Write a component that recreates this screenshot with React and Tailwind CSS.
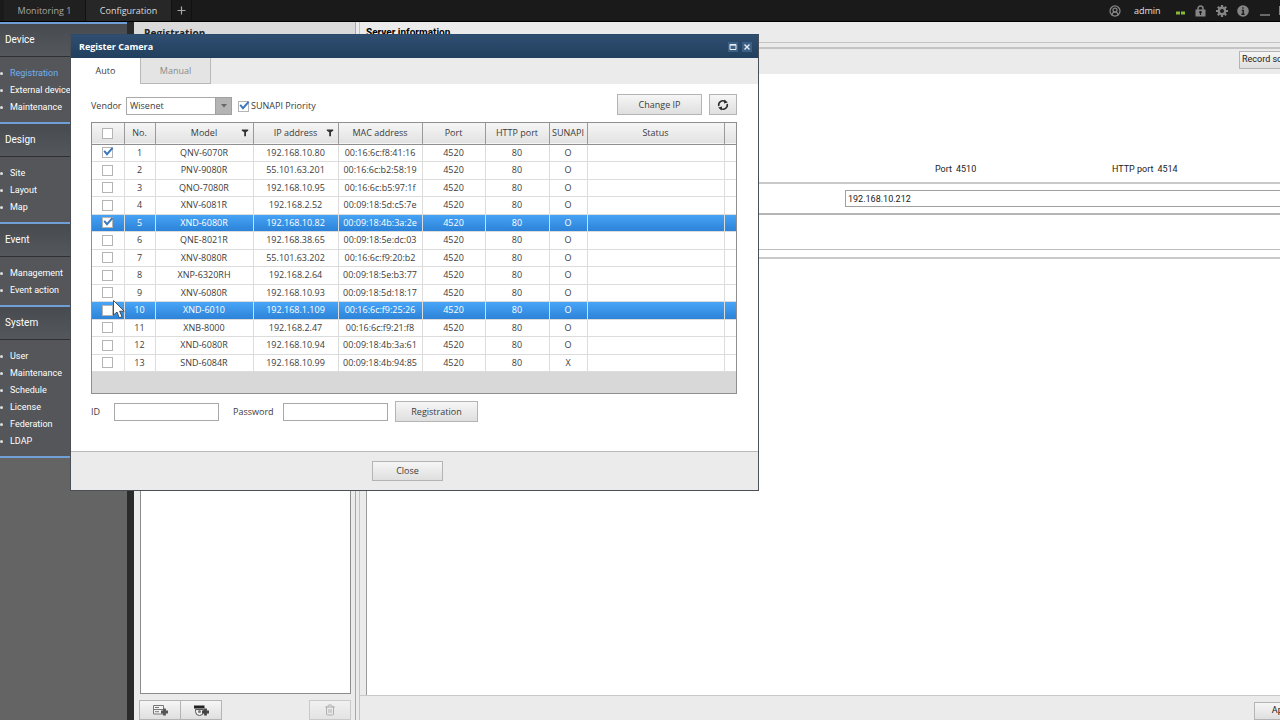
import React from 'react';
import { CircleUserRound, Trash2 } from 'lucide-react';

const menu = [
  { title: 'Device', items: ['Registration', 'External device', 'Maintenance'] },
  { title: 'Design', items: ['Site', 'Layout', 'Map'] },
  { title: 'Event', items: ['Management', 'Event action'] },
  { title: 'System', items: ['User', 'Maintenance', 'Schedule', 'License', 'Federation', 'LDAP'] },
];

const cameras = [
  { model: 'QNV-6070R', ip: '192.168.10.80', mac: '00:16:6c:f8:41:16', sunapi: 'O', checked: true },
  { model: 'PNV-9080R', ip: '55.101.63.201', mac: '00:16:6c:b2:58:19', sunapi: 'O' },
  { model: 'QNO-7080R', ip: '192.168.10.95', mac: '00:16:6c:b5:97:1f', sunapi: 'O' },
  { model: 'XNV-6081R', ip: '192.168.2.52', mac: '00:09:18:5d:c5:7e', sunapi: 'O' },
  { model: 'XND-6080R', ip: '192.168.10.82', mac: '00:09:18:4b:3a:2e', sunapi: 'O', checked: true, selected: true },
  { model: 'QNE-8021R', ip: '192.168.38.65', mac: '00:09:18:5e:dc:03', sunapi: 'O' },
  { model: 'XNV-8080R', ip: '55.101.63.202', mac: '00:16:6c:f9:20:b2', sunapi: 'O' },
  { model: 'XNP-6320RH', ip: '192.168.2.64', mac: '00:09:18:5e:b3:77', sunapi: 'O' },
  { model: 'XNV-6080R', ip: '192.168.10.93', mac: '00:09:18:5d:18:17', sunapi: 'O' },
  { model: 'XND-6010', ip: '192.168.1.109', mac: '00:16:6c:f9:25:26', sunapi: 'O', selected: true },
  { model: 'XNB-8000', ip: '192.168.2.47', mac: '00:16:6c:f9:21:f8', sunapi: 'O' },
  { model: 'XND-6080R', ip: '192.168.10.94', mac: '00:09:18:4b:3a:61', sunapi: 'O' },
  { model: 'SND-6084R', ip: '192.168.10.99', mac: '00:09:18:4b:94:85', sunapi: 'X' },
];

const Check = ({ label, ...props }) => (
  <span className="relative inline-block w-[11px] h-[11px] align-middle">
    <input
      type="checkbox"
      aria-label={label}
      className="peer appearance-none block w-[11px] h-[11px] bg-white border border-[#b4b4b4]"
      {...props}
    />
    <svg viewBox="0 0 11 11" className="hidden peer-checked:block absolute inset-0 w-[11px] h-[11px] pointer-events-none overflow-visible">
      <path d="M2.2 3.8 L5 7.2 L10.6 0.8" fill="none" stroke="#3a78be" strokeWidth="1.9" />
    </svg>
  </span>
);

const Filter = () => (
  <svg viewBox="0 0 8 8" className="w-2 h-2 shrink-0">
    <path d="M0.8 0.5h6.4v1.3L5 3.2v4H3.2v-4L0.8 1.8z" fill="#333" />
  </svg>
);

const Button = ({ className, children, ...props }) => (
  <button
    className={`flex items-center border border-[#b4b4b4] bg-linear-to-b from-[#f6f6f6] to-[#dfdfdf] ${className}`}
    {...props}
  >
    {children}
  </button>
);

const TopBar = () => (
  <header className="h-[22px] shrink-0 flex items-stretch bg-[#1a1a1a] border-b border-black text-[9px] text-[#a8a8a8]">
    <nav className="flex pl-1">
      <button className="w-[82px] border-r border-[#111] bg-[#202020]">Monitoring 1</button>
      <button className="w-[85px] bg-[#272727] text-[#dcdcdc]">Configuration</button>
      <button aria-label="Add tab" className="w-[21px] flex items-center justify-center border-x border-[#111]">
        <svg viewBox="0 0 9 9" className="w-[9px] h-[9px]"><path d="M4.5 0.5v8M0.5 4.5h8" stroke="#aaa" strokeWidth="1.2" /></svg>
      </button>
    </nav>
    <div className="ml-auto flex items-center">
      <CircleUserRound className="w-3 h-3 mr-[13px] text-[#858585]" strokeWidth={2.5} />
      <span className="w-[42px] text-[#e0e0e0]">admin</span>
      <svg viewBox="0 0 10 4" className="w-[10px] h-1 mr-[9px] mt-[5px]">
        <path d="M0 0.5h4v3H0zM5 0.5h4v3H5z" fill="#86b93a" />
      </svg>
      <svg viewBox="0 0 11 12" className="w-[11px] h-3 mr-[10px]">
        <path d="M3 5V3.5a2.5 2.5 0 0 1 5 0V5" fill="none" stroke="#858585" strokeWidth="1.5" />
        <path d="M0.5 4.5h10v7h-10z" fill="#858585" />
        <path d="M5.5 6v4M4 7.2h3" stroke="#1a1a1a" strokeWidth="1.2" />
      </svg>
      <svg viewBox="0 0 12 12" className="w-3 h-3 mr-[9px]">
        <circle cx="6" cy="6" r="3.2" fill="none" stroke="#858585" strokeWidth="2.4" />
        <path d="M6 0v2.5M6 9.5V12M0 6h2.5M9.5 6H12M1.8 1.8l1.7 1.7M8.5 8.5l1.7 1.7M10.2 1.8L8.5 3.5M3.5 8.5l-1.7 1.7" stroke="#858585" strokeWidth="2.2" />
      </svg>
      <svg viewBox="0 0 12 12" className="w-3 h-3 mr-[11px]">
        <circle cx="6" cy="6" r="5.8" fill="#858585" />
        <path d="M6 2.2v1.6M4.8 5.4H6.2V9M4.5 9.2h3" fill="none" stroke="#1a1a1a" strokeWidth="1.4" />
      </svg>
      <svg viewBox="0 0 10 2" className="w-[10px] h-[2px] mr-[9px] mt-2"><path d="M0 1h10" stroke="#858585" strokeWidth="1.5" /></svg>
      <span className="w-px h-[9px] bg-[#858585]" />
    </div>
  </header>
);

const SideMenu = () => (
  <aside className="w-[127px] shrink-0 bg-[#646464] text-white font-['Roboto',sans-serif]">
    <div className="border-b-2 border-[#6f9fd6]">
      {menu.map((section) => (
        <section key={section.title} className="bg-[#545659] border-t-2 border-[#6f9fd6]">
          <h2 className="h-[33px] pl-[5px] pb-[2px] flex items-center text-[10px] bg-linear-to-b from-[#474a4e] to-[#54575b] border-b border-[#2e3033]">
            {section.title}
          </h2>
          <ul className="pt-2 pb-[6px]">
            {section.items.map((item, i) => (
              <li key={item} className="h-[17px] flex items-center text-[9px]">
                <span className="w-[10px] flex"><span className="w-[3px] h-[3px] rounded-full bg-[#dedede]" /></span>
                <a href="#" className={section.title === 'Device' && i === 0 ? 'text-[#6fb1f5]' : 'text-white'}>{item}</a>
              </li>
            ))}
          </ul>
        </section>
      ))}
    </div>
  </aside>
);

const TreePanel = () => (
  <section className="w-[222px] shrink-0 flex flex-col bg-[#ebebeb] border-r border-[#a9a9a9]">
    <h2 className="h-[26px] pl-[10px] pt-1 text-[10px] leading-[14px] font-bold text-[#222] bg-[#dadada] border-b border-[#bbb]">Registration</h2>
    <div className="flex-1 ml-[6px] mr-1 bg-white border border-[#8c8c8c]" />
    <div className="h-[26px] pl-[5px] pr-1 pt-[6px] flex">
      <Button aria-label="Add server" className="w-[42px] justify-center">
        <svg viewBox="0 0 15 11" className="w-[15px] h-[11px]">
          <path d="M0.5 0.5h10v4h-10zM0.5 4.5h10v4.5h-10zM2 2.5h4M2 6.7h4" fill="#f2f2f2" stroke="#777" />
          <path d="M11.5 3.5v7M8 7h7" stroke="#555" strokeWidth="2.8" />
        </svg>
      </Button>
      <Button aria-label="Add camera" className="w-[42px] -ml-px justify-center">
        <svg viewBox="0 0 15 11" className="w-[15px] h-[11px]">
          <path d="M0 0.5h10.5v3H0z" fill="#222" />
          <path d="M1.5 4.5h8v2a4 4 0 0 1-8 0z" fill="#eee" stroke="#555" />
          <circle cx="5.5" cy="6.5" r="1.5" fill="#777" />
          <path d="M11.5 3.5v7M8 7h7" stroke="#444" strokeWidth="2.8" />
        </svg>
      </Button>
      <Button aria-label="Delete" disabled className="w-[42px] ml-auto justify-center opacity-60">
        <Trash2 className="w-3 h-3 text-[#888]" />
      </Button>
    </div>
  </section>
);

const ServerPanel = () => (
  <main className="flex-1 min-w-0 flex flex-col ml-[3px] overflow-hidden bg-[#ebebeb] border-l border-[#c4c4c4] text-[9px] text-[#222] font-['Roboto',sans-serif]">
    <h2 className="h-[21px] pl-[6px] pt-1 text-[10px] leading-[14px] font-bold text-black border-b border-[#c4c4c4]">Server information</h2>
    <div className="h-[27px] mt-1 pt-[2px] border-t-2 border-[#c4c4c4] flex justify-end items-start">
      <Button className="w-[82px] h-[18px] px-[2px] -mr-[41px] shrink-0 border-[#8c8c8c] whitespace-nowrap">Record schedule</Button>
    </div>
    <div className="flex-1 ml-[6px] bg-white border-l border-[#9a9a9a]">
      <div className="h-[110px] pb-[6px] flex items-end justify-end border-b-2 border-[#c9c9c9]">
        <dl className="flex gap-1 w-[177px]"><dt>Port</dt><dd>4510</dd></dl>
        <dl className="flex gap-1 w-[168px]"><dt>HTTP port</dt><dd>4514</dd></dl>
      </div>
      <div className="h-[31px] pt-[6px] flex justify-end border-b-2 border-[#b5b5b5]">
        <input
          aria-label="IP address"
          defaultValue="192.168.10.212"
          className="w-[436px] h-[17px] -mr-px px-[2px] bg-white border border-[#a0a0a0] outline-none"
        />
      </div>
      <div className="h-[35px] border-b border-[#bcbcbc]" />
      <div className="h-[9px] border-b-2 border-[#c9c9c9]" />
    </div>
    <div className="h-[25px] pt-[6px] flex justify-end border-t border-[#c9c9c9]">
      <Button className="w-[58px] h-[18px] -mr-8 shrink-0 justify-center border-[#8c8c8c]">Apply</Button>
    </div>
  </main>
);

const CameraTable = () => (
  <div className="h-[272px] flex flex-col bg-[#d8d8d8] border border-[#8f8f8f]">
    <table className="w-full h-[249px] table-fixed border-collapse bg-white text-center leading-3">
      <colgroup>
        <col className="w-[32px]" />
        <col className="w-[31px]" />
        <col className="w-[98px]" />
        <col className="w-[85px]" />
        <col className="w-[84px]" />
        <col className="w-[63px]" />
        <col className="w-[64px]" />
        <col className="w-[38px]" />
        <col />
        <col className="w-[12px]" />
      </colgroup>
      <thead>
        <tr className="h-[21px] bg-linear-to-b from-[#f6f6f6] to-[#e2e2e2] border-b border-[#8f8f8f] *:p-0 *:font-normal *:border-r *:border-[#9a9a9a] *:last:border-r-0">
          <th><div className="flex justify-center"><Check label="Select all" /></div></th>
          <th>No.</th>
          <th><div className="flex items-center pr-1"><span className="flex-1 pl-3">Model</span><Filter /></div></th>
          <th><div className="flex items-center pr-1"><span className="flex-1 pl-3">IP address</span><Filter /></div></th>
          <th>MAC address</th>
          <th>Port</th>
          <th>HTTP port</th>
          <th className="whitespace-nowrap">SUNAPI</th>
          <th>Status</th>
          <th />
        </tr>
      </thead>
      <tbody>
        {cameras.map((cam, i) => (
          <tr
            key={i}
            className={`*:p-0 *:border-r *:border-[#dcdcdc] *:last:border-r-0 border-b border-[#dcdcdc] ${cam.selected ? 'bg-linear-to-b from-[#47a5f7] to-[#2d83d8] text-white' : ''}`}
          >
            <td><div className="flex justify-center"><Check label={`Select camera ${i + 1}`} defaultChecked={cam.checked} /></div></td>
            <td>{i + 1}</td>
            <td>{cam.model}</td>
            <td>{cam.ip}</td>
            <td>{cam.mac}</td>
            <td>4520</td>
            <td>80</td>
            <td>{cam.sunapi}</td>
            <td />
            <td />
          </tr>
        ))}
      </tbody>
    </table>
  </div>
);

const RegisterDialog = () => (
  <div
    role="dialog"
    aria-labelledby="dialog-title"
    className="absolute left-[70px] top-[34px] w-[689px] bg-white border border-[#4a4f55] border-t-[#2c4a6b] text-[9px] text-[#3c3c3c]"
  >
    <div className="h-[23px] pl-2 pr-[6px] flex items-center gap-1 bg-linear-to-b from-[#2f4e70] to-[#21405f] text-white">
      <h1 id="dialog-title" className="mr-auto font-bold">Register Camera</h1>
      <button aria-label="Maximize" className="w-[10px] h-[10px] flex items-center justify-center bg-[#3b5f85]">
        <svg viewBox="0 0 8 8" className="w-2 h-2"><path d="M1 1.5h6v5H1zM1 2.2h6" fill="none" stroke="#e8eef4" /></svg>
      </button>
      <button aria-label="Close window" className="w-[10px] h-[10px] flex items-center justify-center bg-[#3b5f85]">
        <svg viewBox="0 0 8 8" className="w-2 h-2"><path d="M1.5 1.5l5 5M6.5 1.5l-5 5" stroke="#e8eef4" strokeWidth="1.4" /></svg>
      </button>
    </div>
    <div role="tablist" className="h-[26px] flex bg-[#ebebeb]">
      <button role="tab" aria-selected="true" className="w-[70px] bg-white border-r border-[#b9b9b9]">Auto</button>
      <button role="tab" aria-selected="false" className="w-[70px] bg-[#e4e4e4] border-r border-b border-[#b9b9b9] text-[#8a8a8a]">Manual</button>
    </div>
    <div className="h-[367px] pt-[10px] pl-5 pr-[21px]">
      <div className="h-[21px] mb-[7px] flex items-end">
        <label htmlFor="vendor" className="w-[35px] h-[18px] flex items-center">Vendor</label>
        <div className="relative w-[106px] h-[18px]">
          <select id="vendor" className="appearance-none w-full h-full pl-[3px] border border-[#a9a9a9] bg-white">
            <option>Wisenet</option>
          </select>
          <span className="absolute right-0 top-0 w-[17px] h-[18px] flex items-center justify-center bg-[#b4b4b4] border border-[#a0a0a0] pointer-events-none">
            <svg viewBox="0 0 6 4" className="w-[6px] h-1"><path d="M0 0h6L3 3.6z" fill="#666" /></svg>
          </span>
        </div>
        <label className="ml-[6px] h-[18px] flex items-center gap-[2px]">
          <Check defaultChecked />
          SUNAPI Priority
        </label>
        <Button className="w-[85px] h-[21px] ml-auto justify-center">Change IP</Button>
        <Button aria-label="Refresh" className="w-7 h-[21px] ml-[7px] justify-center">
          <svg viewBox="0 0 12 12" className="w-3 h-3">
            <path d="M1.8 7A4.2 4.2 0 0 1 8 2.4M10.2 5A4.2 4.2 0 0 1 4 9.6" fill="none" stroke="#2b2b2b" strokeWidth="1.6" />
            <path d="M7.4 0.4L10.8 3.4L7 4.6zM4.6 11.6L1.2 8.6L5 7.4z" fill="#2b2b2b" />
          </svg>
        </Button>
      </div>
      <CameraTable />
      <form className="mt-[7px] flex items-center">
        <label htmlFor="camera-id" className="w-[23px]">ID</label>
        <input id="camera-id" className="w-[105px] h-[18px] px-1 bg-white border border-[#a9a9a9]" />
        <label htmlFor="camera-password" className="w-[50px] ml-[14px]">Password</label>
        <input id="camera-password" type="password" className="w-[105px] h-[18px] px-1 bg-white border border-[#a9a9a9]" />
        <Button type="button" className="w-[83px] h-[21px] ml-[7px] justify-center">Registration</Button>
      </form>
    </div>
    <div className="h-[39px] flex items-center justify-center bg-[#ebebeb] border-t border-[#b9b9b9]">
      <Button className="w-[71px] h-5 mr-[14px] justify-center">Close</Button>
    </div>
    <svg viewBox="0 0 12 19" className="absolute left-[42px] top-[265px] w-3 h-[19px]">
      <path d="M0.5 0.5V15L4 12L6.3 17.8L9 16.7L6.6 11.2H11.2z" fill="#fff" stroke="#333" strokeWidth="0.8" />
    </svg>
  </div>
);

export default function App() {
  return (
    <div className="relative h-screen flex flex-col overflow-hidden bg-[#2a2a2a] font-['Open_Sans',sans-serif]">
      <TopBar />
      <div className="flex-1 min-h-0 flex bg-[#ebebeb]">
        <SideMenu />
        <div className="w-[7px] shrink-0 bg-[#2a2a2a]" />
        <TreePanel />
        <ServerPanel />
      </div>
      <RegisterDialog />
    </div>
  );
}
